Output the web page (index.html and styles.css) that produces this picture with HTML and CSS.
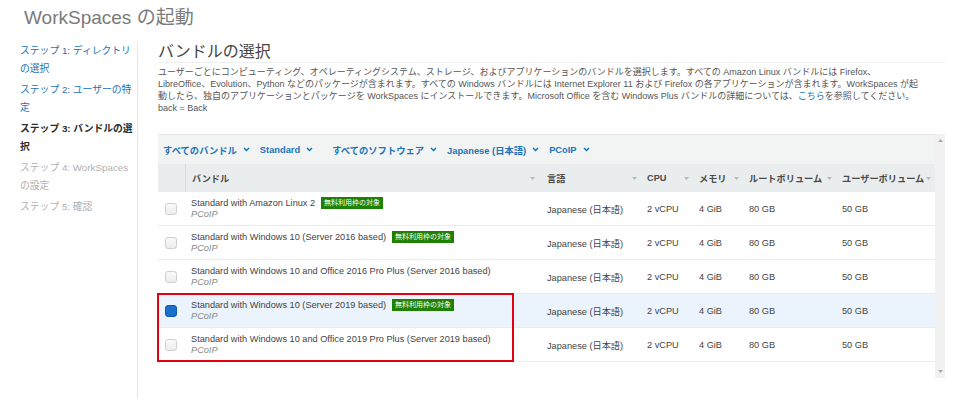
FILE: index.html
```html
<!DOCTYPE html>
<html lang="ja">
<head>
<meta charset="utf-8">
<title>WorkSpaces の起動</title>
<link rel="stylesheet" href="styles.css">
</head>
<body>
<h1 class="page-title">WorkSpaces の起動</h1>
<div class="layout">
  <ul class="steps">
    <li class="step step-link">ステップ 1: ディレクトリの選択</li>
    <li class="step step-link">ステップ 2: ユーザーの特定</li>
    <li class="step step-current">ステップ 3: バンドルの選択</li>
    <li class="step step-disabled">ステップ 4: WorkSpaces の設定</li>
    <li class="step step-disabled">ステップ 5: 確認</li>
  </ul>
  <div class="main">
    <h2 class="section-title">バンドルの選択</h2>
    <p class="desc">ユーザーごとにコンピューティング、オペレーティングシステム、ストレージ、およびアプリケーションのバンドルを選択します。すべての Amazon Linux バンドルには Firefox、LibreOffice、Evolution、Python などのパッケージが含まれます。すべての Windows バンドルには Internet Explorer 11 および Firefox の各アプリケーションが含まれます。WorkSpaces が起動したら、独自のアプリケーションとパッケージを WorkSpaces にインストールできます。Microsoft Office を含む Windows Plus バンドルの詳細については、<a class="link" href="#">こちら</a>を参照してください。<br>back = Back</p>

    <div class="table-wrap">
      <div class="table-area">
        <div class="filter-bar">
          <span class="filter">すべてのバンドル<svg class="chev" width="7" height="5" viewBox="0 0 7 5"><path d="M1 1l2.5 2.5L6 1" stroke="#0073bb" stroke-width="1.3" fill="none"/></svg></span>
          <span class="filter filter-wide">Standard<svg class="chev" width="7" height="5" viewBox="0 0 7 5"><path d="M1 1l2.5 2.5L6 1" stroke="#0073bb" stroke-width="1.3" fill="none"/></svg></span>
          <span class="filter">すべてのソフトウェア<svg class="chev" width="7" height="5" viewBox="0 0 7 5"><path d="M1 1l2.5 2.5L6 1" stroke="#0073bb" stroke-width="1.3" fill="none"/></svg></span>
          <span class="filter">Japanese (日本語)<svg class="chev" width="7" height="5" viewBox="0 0 7 5"><path d="M1 1l2.5 2.5L6 1" stroke="#0073bb" stroke-width="1.3" fill="none"/></svg></span>
          <span class="filter">PCoIP<svg class="chev" width="7" height="5" viewBox="0 0 7 5"><path d="M1 1l2.5 2.5L6 1" stroke="#0073bb" stroke-width="1.3" fill="none"/></svg></span>
        </div>
        <div class="row head">
          <div class="cell cell-check"></div>
          <div class="cell hcell first">バンドル<svg class="sort" width="5" height="3" viewBox="0 0 5 3"><path d="M0 0h5L2.5 3z" fill="#b8b8b8"/></svg></div>
          <div class="cell hcell">言語<svg class="sort" width="5" height="3" viewBox="0 0 5 3"><path d="M0 0h5L2.5 3z" fill="#b8b8b8"/></svg></div>
          <div class="cell hcell">CPU<svg class="sort" width="5" height="3" viewBox="0 0 5 3"><path d="M0 0h5L2.5 3z" fill="#b8b8b8"/></svg></div>
          <div class="cell hcell">メモリ<svg class="sort" width="5" height="3" viewBox="0 0 5 3"><path d="M0 0h5L2.5 3z" fill="#b8b8b8"/></svg></div>
          <div class="cell hcell">ルートボリューム<svg class="sort" width="5" height="3" viewBox="0 0 5 3"><path d="M0 0h5L2.5 3z" fill="#b8b8b8"/></svg></div>
          <div class="cell hcell">ユーザーボリューム<svg class="sort" width="5" height="3" viewBox="0 0 5 3"><path d="M0 0h5L2.5 3z" fill="#b8b8b8"/></svg></div>
        </div>

        <div class="row">
          <div class="cell cell-check"><span class="checkbox"></span></div>
          <div class="cell bundle"><div class="name">Standard with Amazon Linux 2<span class="badge">無料利用枠の対象</span></div><div class="proto">PCoIP</div></div>
          <div class="cell">Japanese (日本語)</div>
          <div class="cell">2 vCPU</div>
          <div class="cell">4 GiB</div>
          <div class="cell">80 GB</div>
          <div class="cell">50 GB</div>
        </div>
        <div class="row">
          <div class="cell cell-check"><span class="checkbox"></span></div>
          <div class="cell bundle"><div class="name">Standard with Windows 10 (Server 2016 based)<span class="badge">無料利用枠の対象</span></div><div class="proto">PCoIP</div></div>
          <div class="cell">Japanese (日本語)</div>
          <div class="cell">2 vCPU</div>
          <div class="cell">4 GiB</div>
          <div class="cell">80 GB</div>
          <div class="cell">50 GB</div>
        </div>
        <div class="row">
          <div class="cell cell-check"><span class="checkbox"></span></div>
          <div class="cell bundle"><div class="name">Standard with Windows 10 and Office 2016 Pro Plus (Server 2016 based)</div><div class="proto">PCoIP</div></div>
          <div class="cell">Japanese (日本語)</div>
          <div class="cell">2 vCPU</div>
          <div class="cell">4 GiB</div>
          <div class="cell">80 GB</div>
          <div class="cell">50 GB</div>
        </div>
        <div class="row selected">
          <div class="cell cell-check"><span class="checkbox checked"></span></div>
          <div class="cell bundle"><div class="name">Standard with Windows 10 (Server 2019 based)<span class="badge">無料利用枠の対象</span></div><div class="proto">PCoIP</div></div>
          <div class="cell">Japanese (日本語)</div>
          <div class="cell">2 vCPU</div>
          <div class="cell">4 GiB</div>
          <div class="cell">80 GB</div>
          <div class="cell">50 GB</div>
        </div>
        <div class="row">
          <div class="cell cell-check"><span class="checkbox"></span></div>
          <div class="cell bundle"><div class="name">Standard with Windows 10 and Office 2019 Pro Plus (Server 2019 based)</div><div class="proto">PCoIP</div></div>
          <div class="cell">Japanese (日本語)</div>
          <div class="cell">2 vCPU</div>
          <div class="cell">4 GiB</div>
          <div class="cell">80 GB</div>
          <div class="cell">50 GB</div>
        </div>
        <div class="highlight"></div>
      </div>
      <div class="scrollbar">
        <svg width="5" height="3" viewBox="0 0 5 3"><path d="M0 3h5L2.5 0z" fill="#a8a8a8"/></svg>
        <svg width="5" height="3" viewBox="0 0 5 3"><path d="M0 0h5L2.5 3z" fill="#a8a8a8"/></svg>
      </div>
    </div>
  </div>
</div>
</body>
</html>
```
FILE: styles.css
```css
* { box-sizing: border-box; }

html, body {
  margin: 0;
  padding: 0;
}

body {
  width: 960px;
  height: 399px;
  overflow: hidden;
  background: #ffffff;
  color: #444444;
  font-family: "Liberation Sans", Arial, "Noto Sans CJK JP", sans-serif;
}

.page-title {
  margin: 0;
  padding-left: 24px;
  height: 36px;
  line-height: 36px;
  font-size: 19px;
  font-weight: normal;
  color: #7b7b7b;
}

.layout {
  display: flex;
  margin-top: 6px;
}

.steps {
  list-style: none;
  margin: 0;
  padding: 0 0 0 20px;
  width: 138px;
  min-height: 357px;
  border-right: 1px solid #e8e8e8;
}

.step {
  width: 116px;
  font-size: 9.8px;
  line-height: 18px;
  margin-bottom: 3px;
}

.step-link { color: #1a73b8; }
.step-current { color: #2b2b2b; font-weight: bold; }
.step-disabled { color: #b0b0b0; }

.main {
  padding-left: 20px;
  width: 807px;
}

.section-title {
  margin: 0;
  font-size: 16px;
  line-height: 20px;
  font-weight: normal;
  color: #444444;
  border-bottom: 1px solid #eeeeee;
}

.desc {
  margin: 3px 0 0;
  width: 764px;
  font-size: 9px;
  line-height: 12px;
  color: #555555;
}

.link {
  color: #1a73b8;
  text-decoration: none;
}

.table-wrap {
  display: flex;
  margin-top: 20px;
}

.table-area {
  position: relative;
  width: 777px;
  height: 244px;
}

.filter-bar {
  display: flex;
  align-items: center;
  height: 30px;
  padding-left: 5px;
  background: #f2f3f3;
  border-top: 1px solid #e6e6e6;
}

.filter {
  display: flex;
  align-items: center;
  margin-right: 10px;
  font-size: 9.3px;
  font-weight: bold;
  color: #1a73b8;
}

.filter-wide { margin-right: 19px; }

.chev { margin-left: 6px; }

.row {
  display: grid;
  grid-template-columns: 27px 356px 100px 52px 50px 93px 99px;
  height: 34px;
  border-bottom: 1px solid #eaeded;
  font-size: 9.2px;
  color: #444444;
}

.row.head {
  height: 28px;
  background: #eaeded;
  border-bottom: none;
}

.cell {
  display: flex;
  align-items: center;
  padding-left: 6px;
  white-space: nowrap;
}

.cell-check {
  padding-left: 7px;
}

.hcell {
  justify-content: space-between;
  padding-right: 4px;
  font-weight: bold;
  color: #4a4a4a;
}

.hcell.first {
  border-left: 1px solid #d8dcdc;
  padding-right: 6px;
}

.sort { flex: none; }

.bundle {
  flex-direction: column;
  align-items: flex-start;
  justify-content: center;
}

.name {
  display: flex;
  align-items: center;
  line-height: 11px;
}

.proto {
  line-height: 11px;
  font-style: italic;
  color: #8a8a8a;
}

.badge {
  margin-left: 6px;
  padding: 0 3px;
  height: 12px;
  line-height: 12px;
  font-size: 7px;
  color: #ffffff;
  background: #1d8102;
}

.checkbox {
  width: 12px;
  height: 12px;
  border-radius: 3px;
  border: 1px solid #cfcfcf;
  background: linear-gradient(#fafafa, #ececec);
}

.checkbox.checked {
  border-color: #0d5aa7;
  background: #1b6fcc;
}

.row.selected {
  background: #ebf3fd;
}

.highlight {
  position: absolute;
  left: -1px;
  top: 159px;
  width: 357px;
  height: 69px;
  border: 2px solid #e3000f;
  pointer-events: none;
}

.scrollbar {
  width: 10px;
  height: 244px;
  background: #f1f1f1;
  display: flex;
  flex-direction: column;
  align-items: center;
  justify-content: space-between;
  padding: 5px 0 5px;
}
```
